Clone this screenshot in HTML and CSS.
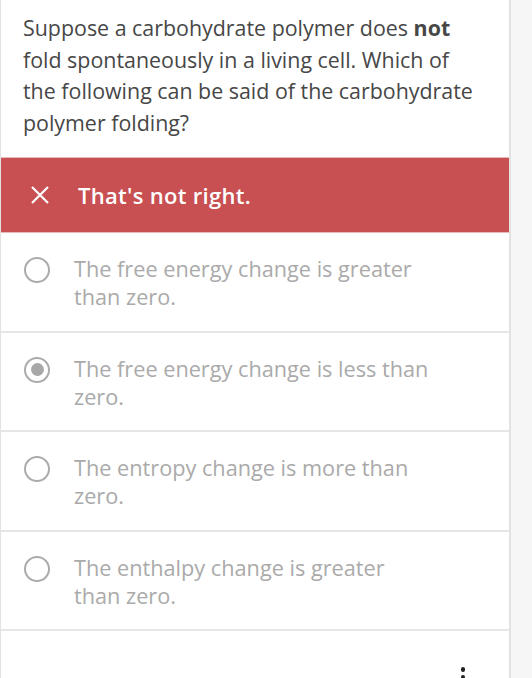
FILE: index.html
```html
<!DOCTYPE html>
<html lang="en">
<head>
    <meta charset="UTF-8">
    <meta name="viewport" content="width=device-width, initial-scale=1.0">
    <title>Question</title>
    <link rel="stylesheet" href="styles.css">
</head>
<body>
    <div class="card">
        <div class="question">
            Suppose a carbohydrate polymer does <b>not</b> fold spontaneously in a living cell. Which of the following can be said of the carbohydrate polymer folding?
        </div>
        <div class="feedback">
            <svg class="feedback-icon" width="20" height="20" viewBox="0 0 20 20">
                <path d="M2 2 L18 18 M18 2 L2 18" stroke="#fff" stroke-width="2.2" fill="none"/>
            </svg>
            <span>That's not right.</span>
        </div>
        <div class="choices">
            <div class="choice">
                <span class="radio"></span>
                <span class="choice-text">The free energy change is greater than zero.</span>
            </div>
            <div class="choice">
                <span class="radio checked"></span>
                <span class="choice-text">The free energy change is less than zero.</span>
            </div>
            <div class="choice">
                <span class="radio"></span>
                <span class="choice-text">The entropy change is more than zero.</span>
            </div>
            <div class="choice">
                <span class="radio"></span>
                <span class="choice-text">The enthalpy change is greater than zero.</span>
            </div>
        </div>
        <div class="footer">
            <span class="more">
                <i></i><i></i><i></i>
            </span>
        </div>
    </div>
</body>
</html>
```

FILE: styles.css
```css
body {
    margin: 0;
    background-color: #f6f6f6;
    font-family: "Open Sans", "Noto Sans", sans-serif;
}
.card {
    width: 508px;
    min-height: 678px;
    background-color: #ffffff;
    border-left: 1px solid #e2e2e2;
    border-right: 2px solid #e2e2e2;
}
.question {
    padding: 12px 24px 19px 22px;
    font-size: 21.4px;
    line-height: 31.5px;
    color: #474747;
}
.question b {
    font-weight: 700;
}
.feedback {
    display: flex;
    align-items: center;
    height: 74px;
    background-color: #c84f52;
    border-top: 1px solid #e9b8b9;
    border-bottom: 1px solid #e9b8b9;
    color: #fff;
    font-size: 22px;
    font-weight: 600;
    letter-spacing: 0.3px;
}
.feedback-icon {
    margin-left: 29px;
    margin-right: 28px;
}
.choice {
    display: flex;
    align-items: flex-start;
    padding: 22px 22px 21.5px 23px;
    border-bottom: 2px solid #e6e6e6;
    height: 54px;
}
.radio {
    flex: none;
    box-sizing: border-box;
    width: 26px;
    height: 26px;
    margin-top: 2px;
    margin-right: 24px;
    border: 2.5px solid #ababab;
    border-radius: 50%;
    display: flex;
    align-items: center;
    justify-content: center;
}
.radio.checked::after {
    content: "";
    width: 13px;
    height: 13px;
    border-radius: 50%;
    background-color: #a8a8a8;
}
.choice-text {
    width: 362px;
    font-size: 21.7px;
    line-height: 28px;
    color: #aaaaaa;
}
.footer {
    display: flex;
    justify-content: flex-end;
    padding: 36px 44px 0 0;
}
.more {
    display: flex;
    flex-direction: column;
    gap: 3px;
}
.more i {
    width: 4.5px;
    height: 4.5px;
    border-radius: 50%;
    background-color: #222;
}
```
